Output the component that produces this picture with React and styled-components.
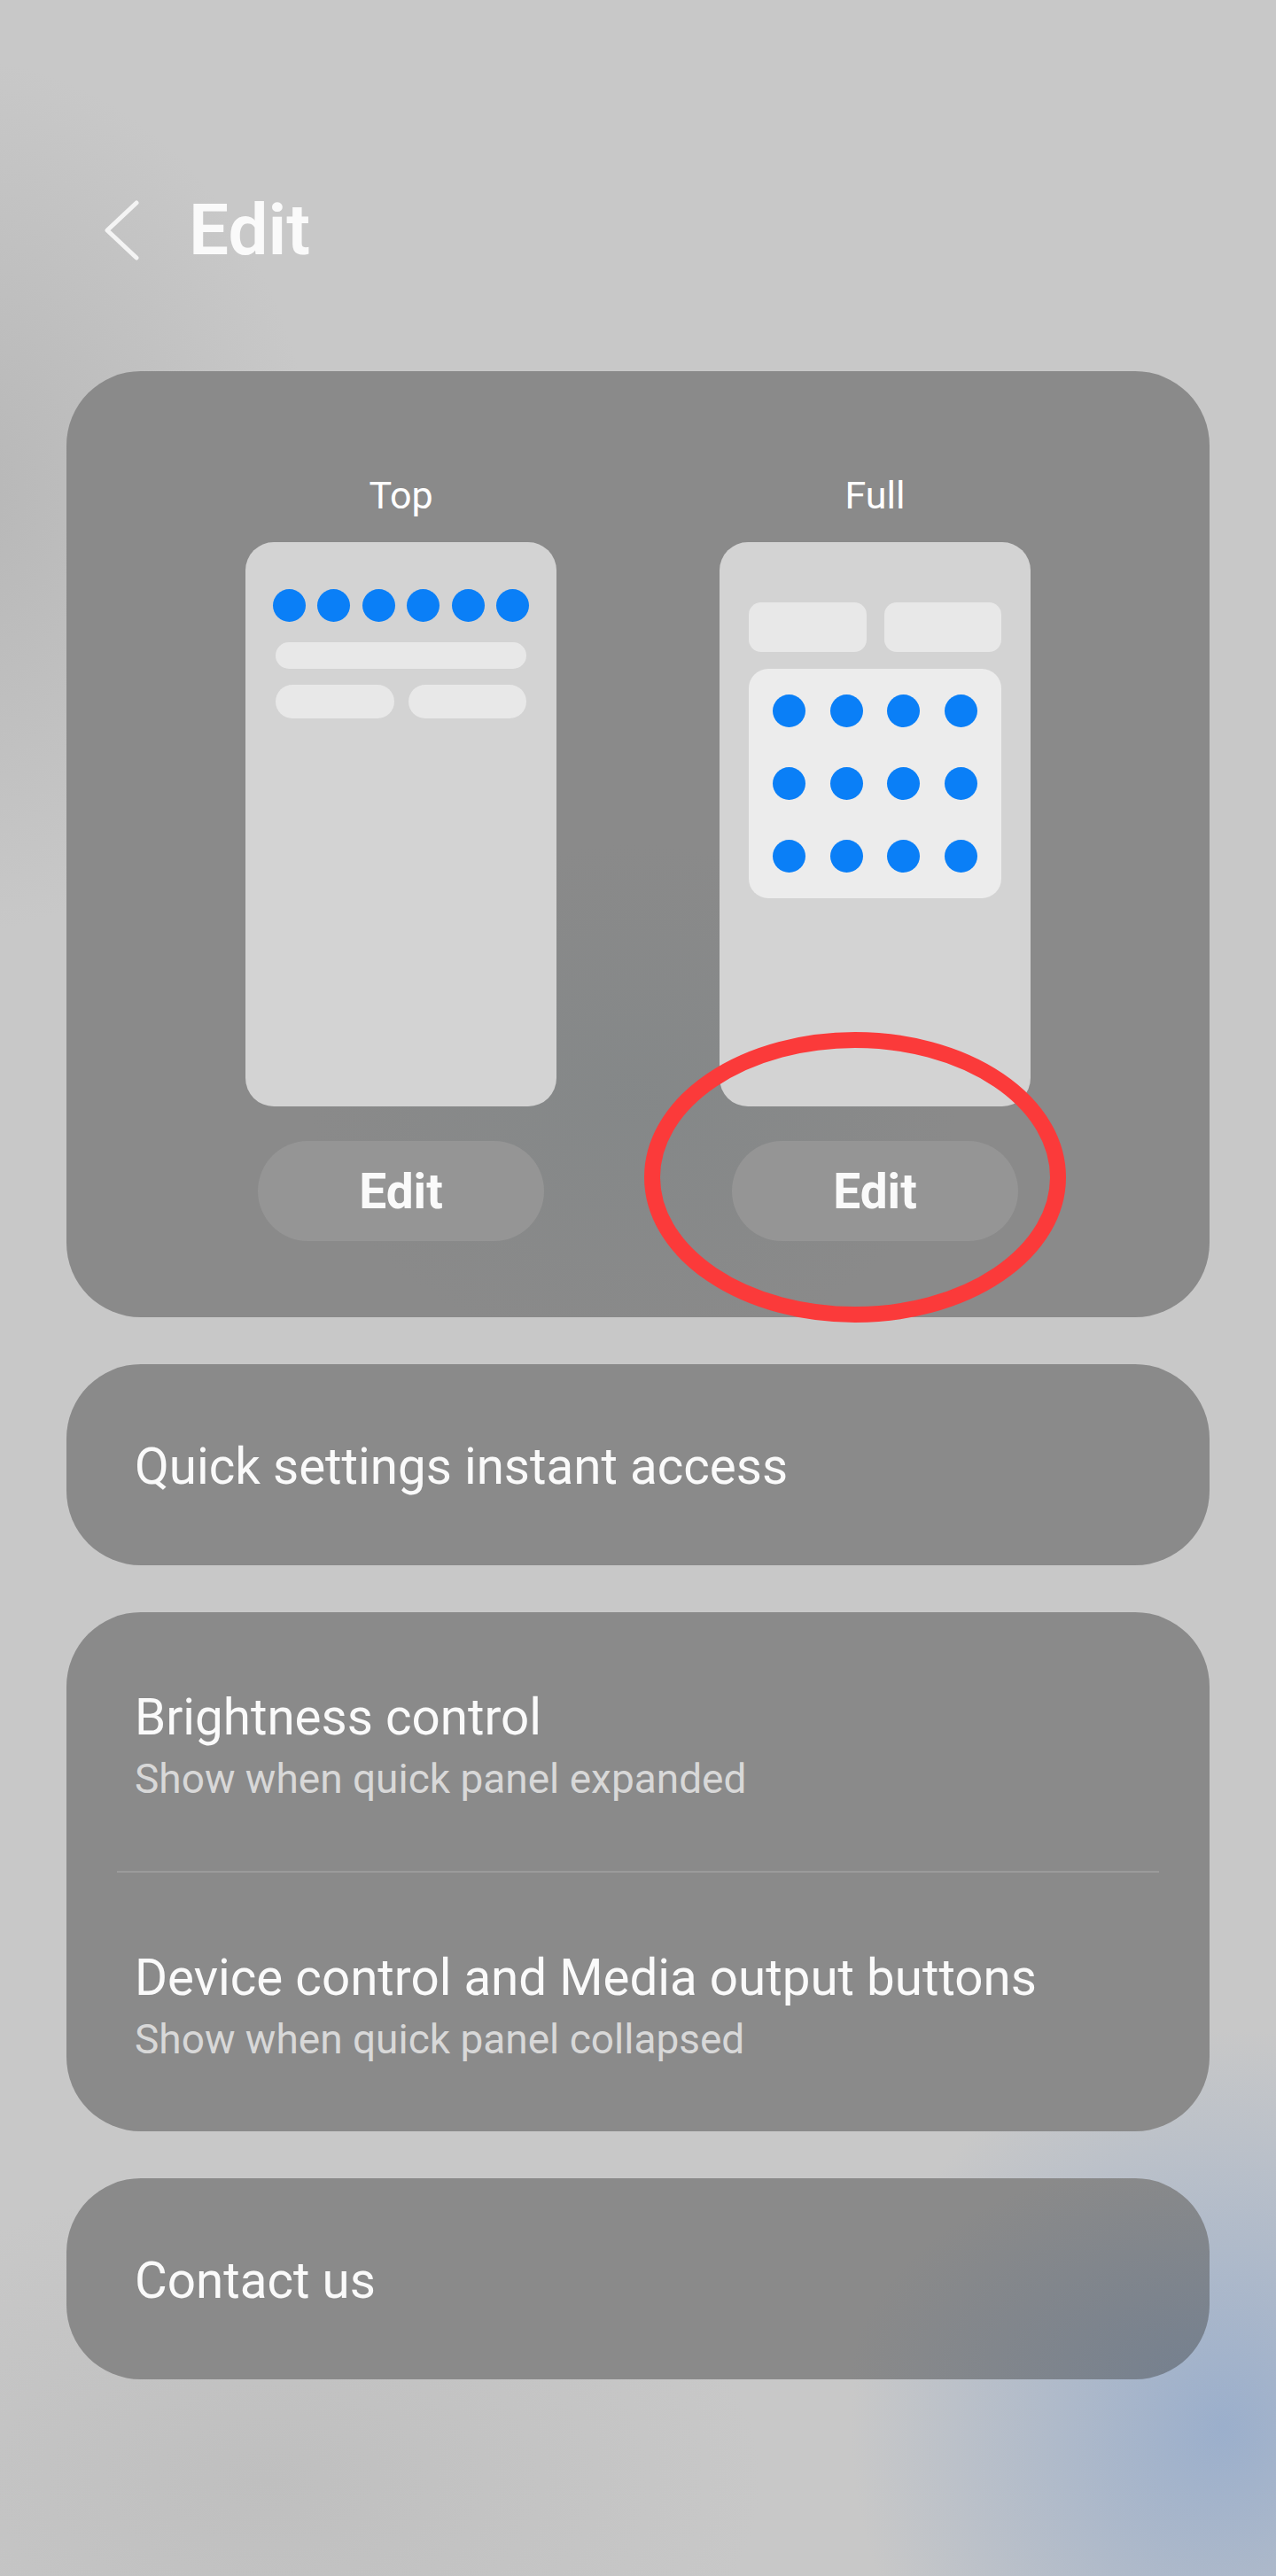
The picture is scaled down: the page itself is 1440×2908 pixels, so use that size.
import React from 'react';
import styled, { createGlobalStyle } from 'styled-components';

const GlobalStyle = createGlobalStyle`
  html, body {
    margin: 0;
    padding: 0;
    background: #c7c7c7;
  }
  * {
    box-sizing: border-box;
  }
`;

const Page = styled.div`
  width: 1440px;
  min-height: 2908px;
  padding: 200px 75px 0;
  font-family: Roboto, "Noto Sans", "Liberation Sans", sans-serif;
  color: #fafafa;
  background:
    radial-gradient(ellipse 560px 600px at 1380px 2740px, rgba(150, 172, 204, 0.9), rgba(150, 172, 204, 0) 75%),
    radial-gradient(ellipse 520px 620px at -60px 560px, rgba(168, 168, 168, 0.55), rgba(168, 168, 168, 0) 80%),
    radial-gradient(ellipse 700px 420px at 300px 2800px, rgba(180, 180, 180, 0.45), rgba(180, 180, 180, 0) 80%),
    #c8c8c8;
`;

const Header = styled.header`
  display: flex;
  align-items: center;
  gap: 56px;
  height: 120px;
  padding-left: 42px;
`;

const BackButton = styled.button`
  display: flex;
  padding: 0;
  border: 0;
  background: none;
  cursor: pointer;
`;

const Title = styled.h1`
  margin: 0;
  font-size: 80px;
  line-height: 1;
  font-weight: 600;
  color: #fafafa;
`;

const Stack = styled.div`
  display: flex;
  flex-direction: column;
  gap: 53px;
  margin-top: 99px;
`;

const Card = styled.section`
  position: relative;
  border-radius: 84px;
  background: #8a8a8a;
`;

const LayoutCard = styled(Card)`
  display: flex;
  justify-content: center;
  gap: 184px;
  padding: 114px 0 86px;
  background:
    radial-gradient(ellipse 460px 360px at 640px 820px, rgba(124, 132, 134, 0.4), rgba(124, 132, 134, 0) 80%),
    #8a8a8a;
`;

const Column = styled.div`
  display: flex;
  flex-direction: column;
  align-items: center;
  width: 351px;
`;

const Label = styled.div`
  font-size: 43px;
  line-height: 52px;
  color: #ffffff;
`;

const Mock = styled.div`
  display: flex;
  flex-direction: column;
  width: 351px;
  height: 637px;
  margin-top: 27px;
  padding: ${(p) => p.$pad};
  border-radius: 32px;
  background: #d3d3d3;
`;

const DotRow = styled.div`
  display: flex;
  justify-content: space-between;
`;

const Dot = styled.span`
  width: 37px;
  height: 37px;
  border-radius: 50%;
  background: #0a7ff7;
`;

const Bar = styled.div`
  height: ${(p) => p.$h}px;
  margin: ${(p) => p.$m};
  flex: ${(p) => (p.$grow ? 1 : 'none')};
  border-radius: 19px;
  background: #e8e8e8;
`;

const BarRow = styled.div`
  display: flex;
  gap: ${(p) => p.$gap}px;
  margin: ${(p) => p.$m};
`;

const Tile = styled.div`
  flex: 1;
  height: 56px;
  border-radius: 14px;
  background: #e8e8e8;
`;

const TilePanel = styled.div`
  display: grid;
  grid-template-columns: repeat(4, 37px);
  justify-content: space-between;
  row-gap: 45px;
  margin-top: 19px;
  padding: 29px 27px;
  border-radius: 22px;
  background: #ececec;
`;

const EditButton = styled.button`
  width: 323px;
  height: 113px;
  margin-top: 39px;
  border: 0;
  border-radius: 57px;
  background: #959595;
  font-family: Roboto, "Noto Sans", "Liberation Sans", sans-serif;
  font-size: 55px;
  font-weight: 700;
  color: #fafafa;
  cursor: pointer;
`;

const Marker = styled.svg`
  position: absolute;
  left: 652px;
  top: 746px;
  pointer-events: none;
`;

const RowCard = styled(Card)`
  display: flex;
  flex-direction: column;
  justify-content: center;
  min-height: 227px;
  padding: 4px 77px 0;
  background: ${(p) =>
    p.$tint
      ? 'radial-gradient(ellipse 520px 320px at 1300px 230px, rgba(104, 122, 146, 0.65), rgba(104, 122, 146, 0) 80%), #8a8a8a'
      : '#8a8a8a'};
`;

const GroupCard = styled(Card)`
  display: flex;
  flex-direction: column;
`;

const Section = styled.div`
  display: flex;
  flex-direction: column;
  justify-content: center;
  height: 292px;
  padding: 10px 77px 0;
`;

const Divider = styled.hr`
  height: 2px;
  margin: 0 57px;
  border: 0;
  background: #9b9b9b;
`;

const ItemTitle = styled.div`
  font-size: 56.5px;
  line-height: 64px;
  color: #fafafa;
`;

const ItemSub = styled.div`
  margin-top: 9px;
  font-size: 46px;
  line-height: 56px;
  color: #d8d8d8;
`;

const Chevron = () => (
  <svg width="40" height="68" viewBox="0 0 40 68">
    <path d="M37 3 L4 34 L37 65" fill="none" stroke="#f4f4f4" strokeWidth="5" strokeLinecap="round" strokeLinejoin="round" />
  </svg>
);

const TopMock = () => (
  <Mock $pad="53px 31px">
    <DotRow>
      {[0, 1, 2, 3, 4, 5].map((i) => <Dot key={i} />)}
    </DotRow>
    <Bar $h={30} $m="23px 3px 0" />
    <BarRow $gap={16} $m="18px 3px 0">
      <Bar $h={38} $m="0" $grow />
      <Bar $h={38} $m="0" $grow />
    </BarRow>
  </Mock>
);

const FullMock = () => (
  <Mock $pad="68px 33px">
    <BarRow $gap={20} $m="0">
      <Tile />
      <Tile />
    </BarRow>
    <TilePanel>
      {Array.from({ length: 12 }).map((_, i) => <Dot key={i} />)}
    </TilePanel>
  </Mock>
);

export default function App() {
  return (
    <Page>
      <GlobalStyle />
      <Header>
        <BackButton aria-label="Back">
          <Chevron />
        </BackButton>
        <Title>Edit</Title>
      </Header>

      <Stack>
        <LayoutCard>
          <Column>
            <Label>Top</Label>
            <TopMock />
            <EditButton>Edit</EditButton>
          </Column>
          <Column>
            <Label>Full</Label>
            <FullMock />
            <EditButton>Edit</EditButton>
          </Column>
          <Marker width="476" height="328" viewBox="0 0 476 328">
            <ellipse cx="238" cy="164" rx="229" ry="155" fill="none" stroke="#fb3a3a" strokeWidth="18" />
          </Marker>
        </LayoutCard>

        <RowCard>
          <ItemTitle>Quick settings instant access</ItemTitle>
        </RowCard>

        <GroupCard>
          <Section>
            <ItemTitle>Brightness control</ItemTitle>
            <ItemSub>Show when quick panel expanded</ItemSub>
          </Section>
          <Divider />
          <Section>
            <ItemTitle>Device control and Media output buttons</ItemTitle>
            <ItemSub>Show when quick panel collapsed</ItemSub>
          </Section>
        </GroupCard>

        <RowCard $tint>
          <ItemTitle>Contact us</ItemTitle>
        </RowCard>
      </Stack>
    </Page>
  );
}
